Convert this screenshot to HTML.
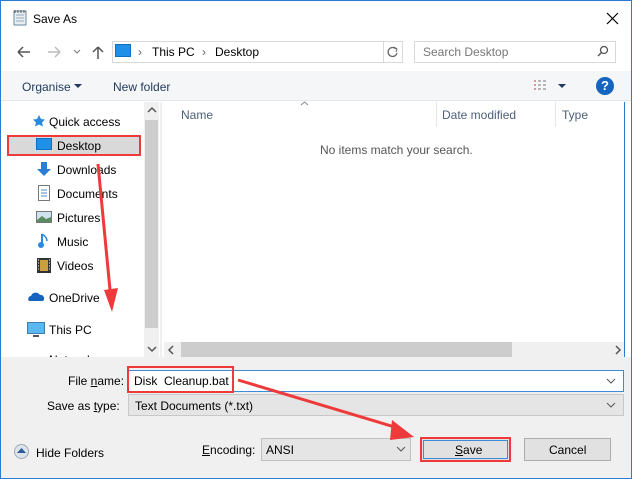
<!DOCTYPE html>
<html><head><meta charset="utf-8"><style>
*{margin:0;padding:0;box-sizing:border-box}
body{width:632px;height:479px;overflow:hidden;background:#fff;font-family:"Liberation Sans",sans-serif;font-size:12px;color:#000;position:relative}
.a{position:absolute;white-space:nowrap}
.t{line-height:14px}
</style></head><body>
<div class="a" style="left:0;top:0;width:632px;height:479px;border:1px solid #2b7bd0"></div>
<svg class="a" style="left:12px;top:9px" width="16" height="17"><rect x="2" y="2" width="12" height="14" fill="#e8eef2" stroke="#6a8aa0"/><path d="M4 6h8M4 9h8M4 12h8" stroke="#9ab"/><path d="M3 1v3M6 1v3M9 1v3M12 1v3" stroke="#555"/></svg>
<div class="a t" style="left:33px;top:12px">Save As</div>
<svg class="a" style="left:606px;top:12px" width="13" height="13"><path d="M1 1L12 12M12 1L1 12" stroke="#000" stroke-width="1.2"/></svg>
<svg class="a" style="left:15px;top:44px" width="100" height="16"><path d="M3 8h12M3 8l5-5M3 8l5 5" stroke="#555" stroke-width="1.5" fill="none"/><path d="M33 8h12M45 8l-5-5M45 8l-5 5" stroke="#bbb" stroke-width="1.5" fill="none"/><path d="M59 6l3 3 3-3" stroke="#777" fill="none"/><path d="M83 3v12M83 3l-5 5M83 3l5 5" stroke="#555" stroke-width="1.5" fill="none"/></svg>
<div class="a" style="left:112px;top:41px;width:291px;height:22px;border:1px solid #d9d9d9"></div>
<div class="a" style="left:383px;top:42px;width:1px;height:20px;background:#d9d9d9"></div>
<svg class="a" style="left:115px;top:44px" width="17" height="14"><rect x="0.5" y="0.5" width="15" height="12" fill="#1e90e8" stroke="#1070c0"/></svg>
<div class="a t" style="left:138px;top:45px;color:#666">›</div>
<div class="a t" style="left:152px;top:45px">This PC</div>
<div class="a t" style="left:202px;top:45px;color:#666">›</div>
<div class="a t" style="left:215px;top:45px">Desktop</div>
<svg class="a" style="left:386px;top:45px" width="14" height="14"><path d="M10 4a4.5 4.5 0 1 0 1 4" stroke="#666" stroke-width="1.3" fill="none"/><path d="M8 2l3 2-1 3" stroke="#666" fill="none"/></svg>
<div class="a" style="left:414px;top:41px;width:202px;height:22px;border:1px solid #d9d9d9"></div>
<div class="a t" style="left:423px;top:45px;color:#777">Search Desktop</div>
<svg class="a" style="left:596px;top:45px" width="14" height="14"><circle cx="8" cy="5" r="3.5" stroke="#555" fill="none" stroke-width="1.3"/><path d="M5.5 7.5L2 11" stroke="#555" stroke-width="1.5"/></svg>
<div class="a" style="left:1px;top:71px;width:630px;height:30px;background:#f5f6f7;border-bottom:1px solid #e8e8e8"></div>
<div class="a t" style="left:22px;top:80px;color:#1e395b">Organise</div>
<svg class="a" style="left:74px;top:84px" width="8" height="5"><path d="M0 0h8L4 4z" fill="#1e395b"/></svg>
<div class="a t" style="left:113px;top:80px;color:#1e395b">New folder</div>
<svg class="a" style="left:534px;top:80px" width="16" height="12"><path d="M0 1h2M0 5h2M0 9h2" stroke="#c33"/><path d="M4 1h3M9 1h3M4 5h3M9 5h3M4 9h3M9 9h3" stroke="#777"/></svg>
<svg class="a" style="left:558px;top:84px" width="8" height="5"><path d="M0 0h8L4 4z" fill="#1e395b"/></svg>
<div class="a" style="left:596px;top:77px;width:18px;height:18px;border-radius:50%;background:#1565c0;color:#fff;font-weight:bold;font-size:13px;text-align:center;line-height:18px">?</div>
<div class="a" style="left:144px;top:102px;width:15px;height:255px;background:#f0f0f0"></div>
<div class="a" style="left:145px;top:120px;width:13px;height:208px;background:#cdcdcd"></div>
<svg class="a" style="left:147px;top:106px" width="10" height="8"><path d="M1 6l4-4 4 4" stroke="#555" stroke-width="1.5" fill="none"/></svg>
<svg class="a" style="left:147px;top:345px" width="10" height="8"><path d="M1 2l4 4 4-4" stroke="#555" stroke-width="1.5" fill="none"/></svg>
<div class="a" style="left:160px;top:102px;width:2px;height:255px;background:#f0f0f0"></div>
<svg class="a" style="left:30px;top:114px" width="16" height="14"><path d="M9 1l2 4 4 .5-3 3 1 4-4-2-4 2 1-4-3-3 4-.5z" fill="#2a8ae0"/></svg>
<div class="a t" style="left:49px;top:115px">Quick access</div>
<div class="a" style="left:7px;top:135px;width:134px;height:21px;background:#d9d9d9;border:2px solid #ee3a3a"></div>
<svg class="a" style="left:36px;top:138px" width="16" height="14"><rect x="0.5" y="0.5" width="15" height="11" fill="#1e90e8" stroke="#1070c0"/></svg>
<div class="a t" style="left:57px;top:139px">Desktop</div>
<svg class="a" style="left:36px;top:162px" width="16" height="15"><path d="M5 0h6v7h4l-7 7-7-7h4z" fill="#2a7fd4"/></svg>
<div class="a t" style="left:57px;top:163px">Downloads</div>
<svg class="a" style="left:38px;top:185px" width="12" height="16"><rect x="0.5" y="0.5" width="11" height="15" fill="#fff" stroke="#777"/><path d="M3 5h6M3 8h6M3 11h6" stroke="#4a8ad0"/></svg>
<div class="a t" style="left:57px;top:187px">Documents</div>
<svg class="a" style="left:36px;top:211px" width="16" height="12"><rect x="0.5" y="0.5" width="15" height="11" fill="#cfe3ef" stroke="#777"/><path d="M1 9l5-4 4 3 5-2v5H1z" fill="#5a8a60"/></svg>
<div class="a t" style="left:57px;top:211px">Pictures</div>
<svg class="a" style="left:38px;top:233px" width="12" height="16"><path d="M4 1v11" stroke="#2a8ae0" stroke-width="2"/><circle cx="3" cy="12" r="3" fill="#2a8ae0"/><path d="M4 1q5 3 5 7" stroke="#2a8ae0" stroke-width="1.5" fill="none"/></svg>
<div class="a t" style="left:57px;top:235px">Music</div>
<svg class="a" style="left:37px;top:258px" width="14" height="15"><rect width="14" height="15" fill="#333"/><rect x="3" y="2" width="8" height="11" fill="#c8a040"/><path d="M1 2h1M1 5h1M1 8h1M1 11h1M12 2h1M12 5h1M12 8h1M12 11h1" stroke="#fff"/></svg>
<div class="a t" style="left:57px;top:259px">Videos</div>
<svg class="a" style="left:27px;top:291px" width="18" height="11"><path d="M2 10a3 3 0 0 1 2-5 5 5 0 0 1 9-1 3.5 3.5 0 0 1 3 6z" fill="#1464c0"/></svg>
<div class="a t" style="left:49px;top:291px">OneDrive</div>
<svg class="a" style="left:27px;top:322px" width="18" height="15"><rect x="0.5" y="0.5" width="17" height="11" fill="#5ab8f0" stroke="#3a80b0"/><path d="M6 14h6" stroke="#555" stroke-width="2"/></svg>
<div class="a t" style="left:49px;top:323px">This PC</div>
<div class="a t" style="left:49px;top:353px;height:4px;overflow:hidden">Network</div>
<div class="a t" style="left:181px;top:108px;color:#4c607a">Name</div>
<svg class="a" style="left:300px;top:101px" width="9" height="5"><path d="M1 4l3.5-3 3.5 3" stroke="#888" fill="none"/></svg>
<div class="a" style="left:436px;top:102px;width:1px;height:25px;background:#e5e5e5"></div>
<div class="a t" style="left:442px;top:108px;color:#4c607a">Date modified</div>
<div class="a" style="left:555px;top:102px;width:1px;height:25px;background:#e5e5e5"></div>
<div class="a t" style="left:562px;top:108px;color:#4c607a">Type</div>
<div class="a t" style="left:320px;top:143px;color:#555">No items match your search.</div>
<div class="a" style="left:164px;top:342px;width:460px;height:15px;background:#f0f0f0"></div>
<div class="a" style="left:181px;top:342px;width:331px;height:15px;background:#cdcdcd"></div>
<svg class="a" style="left:167px;top:345px" width="8" height="10"><path d="M6 1L2 5l4 4" stroke="#555" stroke-width="1.5" fill="none"/></svg>
<svg class="a" style="left:614px;top:345px" width="8" height="10"><path d="M2 1l4 4-4 4" stroke="#555" stroke-width="1.5" fill="none"/></svg>
<div class="a" style="left:624px;top:102px;width:1px;height:255px;background:#2b7bd0"></div>
<div class="a" style="left:1px;top:357px;width:630px;height:121px;background:#f0f0f0"></div>
<div class="a t" style="left:68px;top:374px">File <u>n</u>ame:</div>
<div class="a" style="left:128px;top:370px;width:496px;height:22px;background:#fff;border:1px solid #3c8ad8"></div>
<div class="a" style="left:127px;top:366px;width:107px;height:27px;border:2px solid #ee3a3a"></div>
<div class="a t" style="left:134px;top:374px">Disk&nbsp; Cleanup.bat</div>
<svg class="a" style="left:606px;top:378px" width="10" height="6"><path d="M1 1l4 4 4-4" stroke="#555" fill="none"/></svg>
<div class="a t" style="left:47px;top:399px">Save as <u>t</u>ype:</div>
<div class="a" style="left:128px;top:394px;width:496px;height:22px;background:#e5e5e5;border:1px solid #c8c8c8"></div>
<div class="a t" style="left:135px;top:399px">Text Documents (*.txt)</div>
<svg class="a" style="left:606px;top:402px" width="10" height="6"><path d="M1 1l4 4 4-4" stroke="#555" fill="none"/></svg>
<div class="a" style="left:14px;top:444px;width:15px;height:15px;border-radius:50%;background:#dde3ea;border:1px solid #a0aab5"></div>
<svg class="a" style="left:17px;top:448px" width="9" height="6"><path d="M0 5L4.5 0 9 5z" fill="#2a5a9a"/></svg>
<div class="a t" style="left:36px;top:446px">Hide Folders</div>
<div class="a t" style="left:202px;top:443px"><u>E</u>ncoding:</div>
<div class="a" style="left:261px;top:438px;width:150px;height:23px;background:#e5e5e5;border:1px solid #c0c0c0"></div>
<div class="a t" style="left:266px;top:443px">ANSI</div>
<svg class="a" style="left:396px;top:446px" width="10" height="6"><path d="M1 1l4 4 4-4" stroke="#555" fill="none"/></svg>
<div class="a" style="left:420px;top:437px;width:91px;height:25px;background:#e1e1e1;border:2px solid #ee3a3a"></div>
<div class="a" style="left:423px;top:440px;width:85px;height:19px;border:1px solid #3c8ad8"></div>
<div class="a t" style="left:455px;top:443px"><u>S</u>ave</div>
<div class="a" style="left:524px;top:438px;width:87px;height:23px;background:#e1e1e1;border:1px solid #adadad"></div>
<div class="a t" style="left:549px;top:443px">Cancel</div>
<svg class="a" style="left:0;top:0" width="632" height="479">
<path d="M98 164L110 290" stroke="#ee3a3a" stroke-width="3"/>
<path d="M104 290L118 288L112 312z" fill="#ee3a3a"/>
<path d="M238 380L398 428" stroke="#ee3a3a" stroke-width="3"/>
<path d="M392 420L414 437L390 440z" fill="#ee3a3a"/>
</svg>
</body></html>
